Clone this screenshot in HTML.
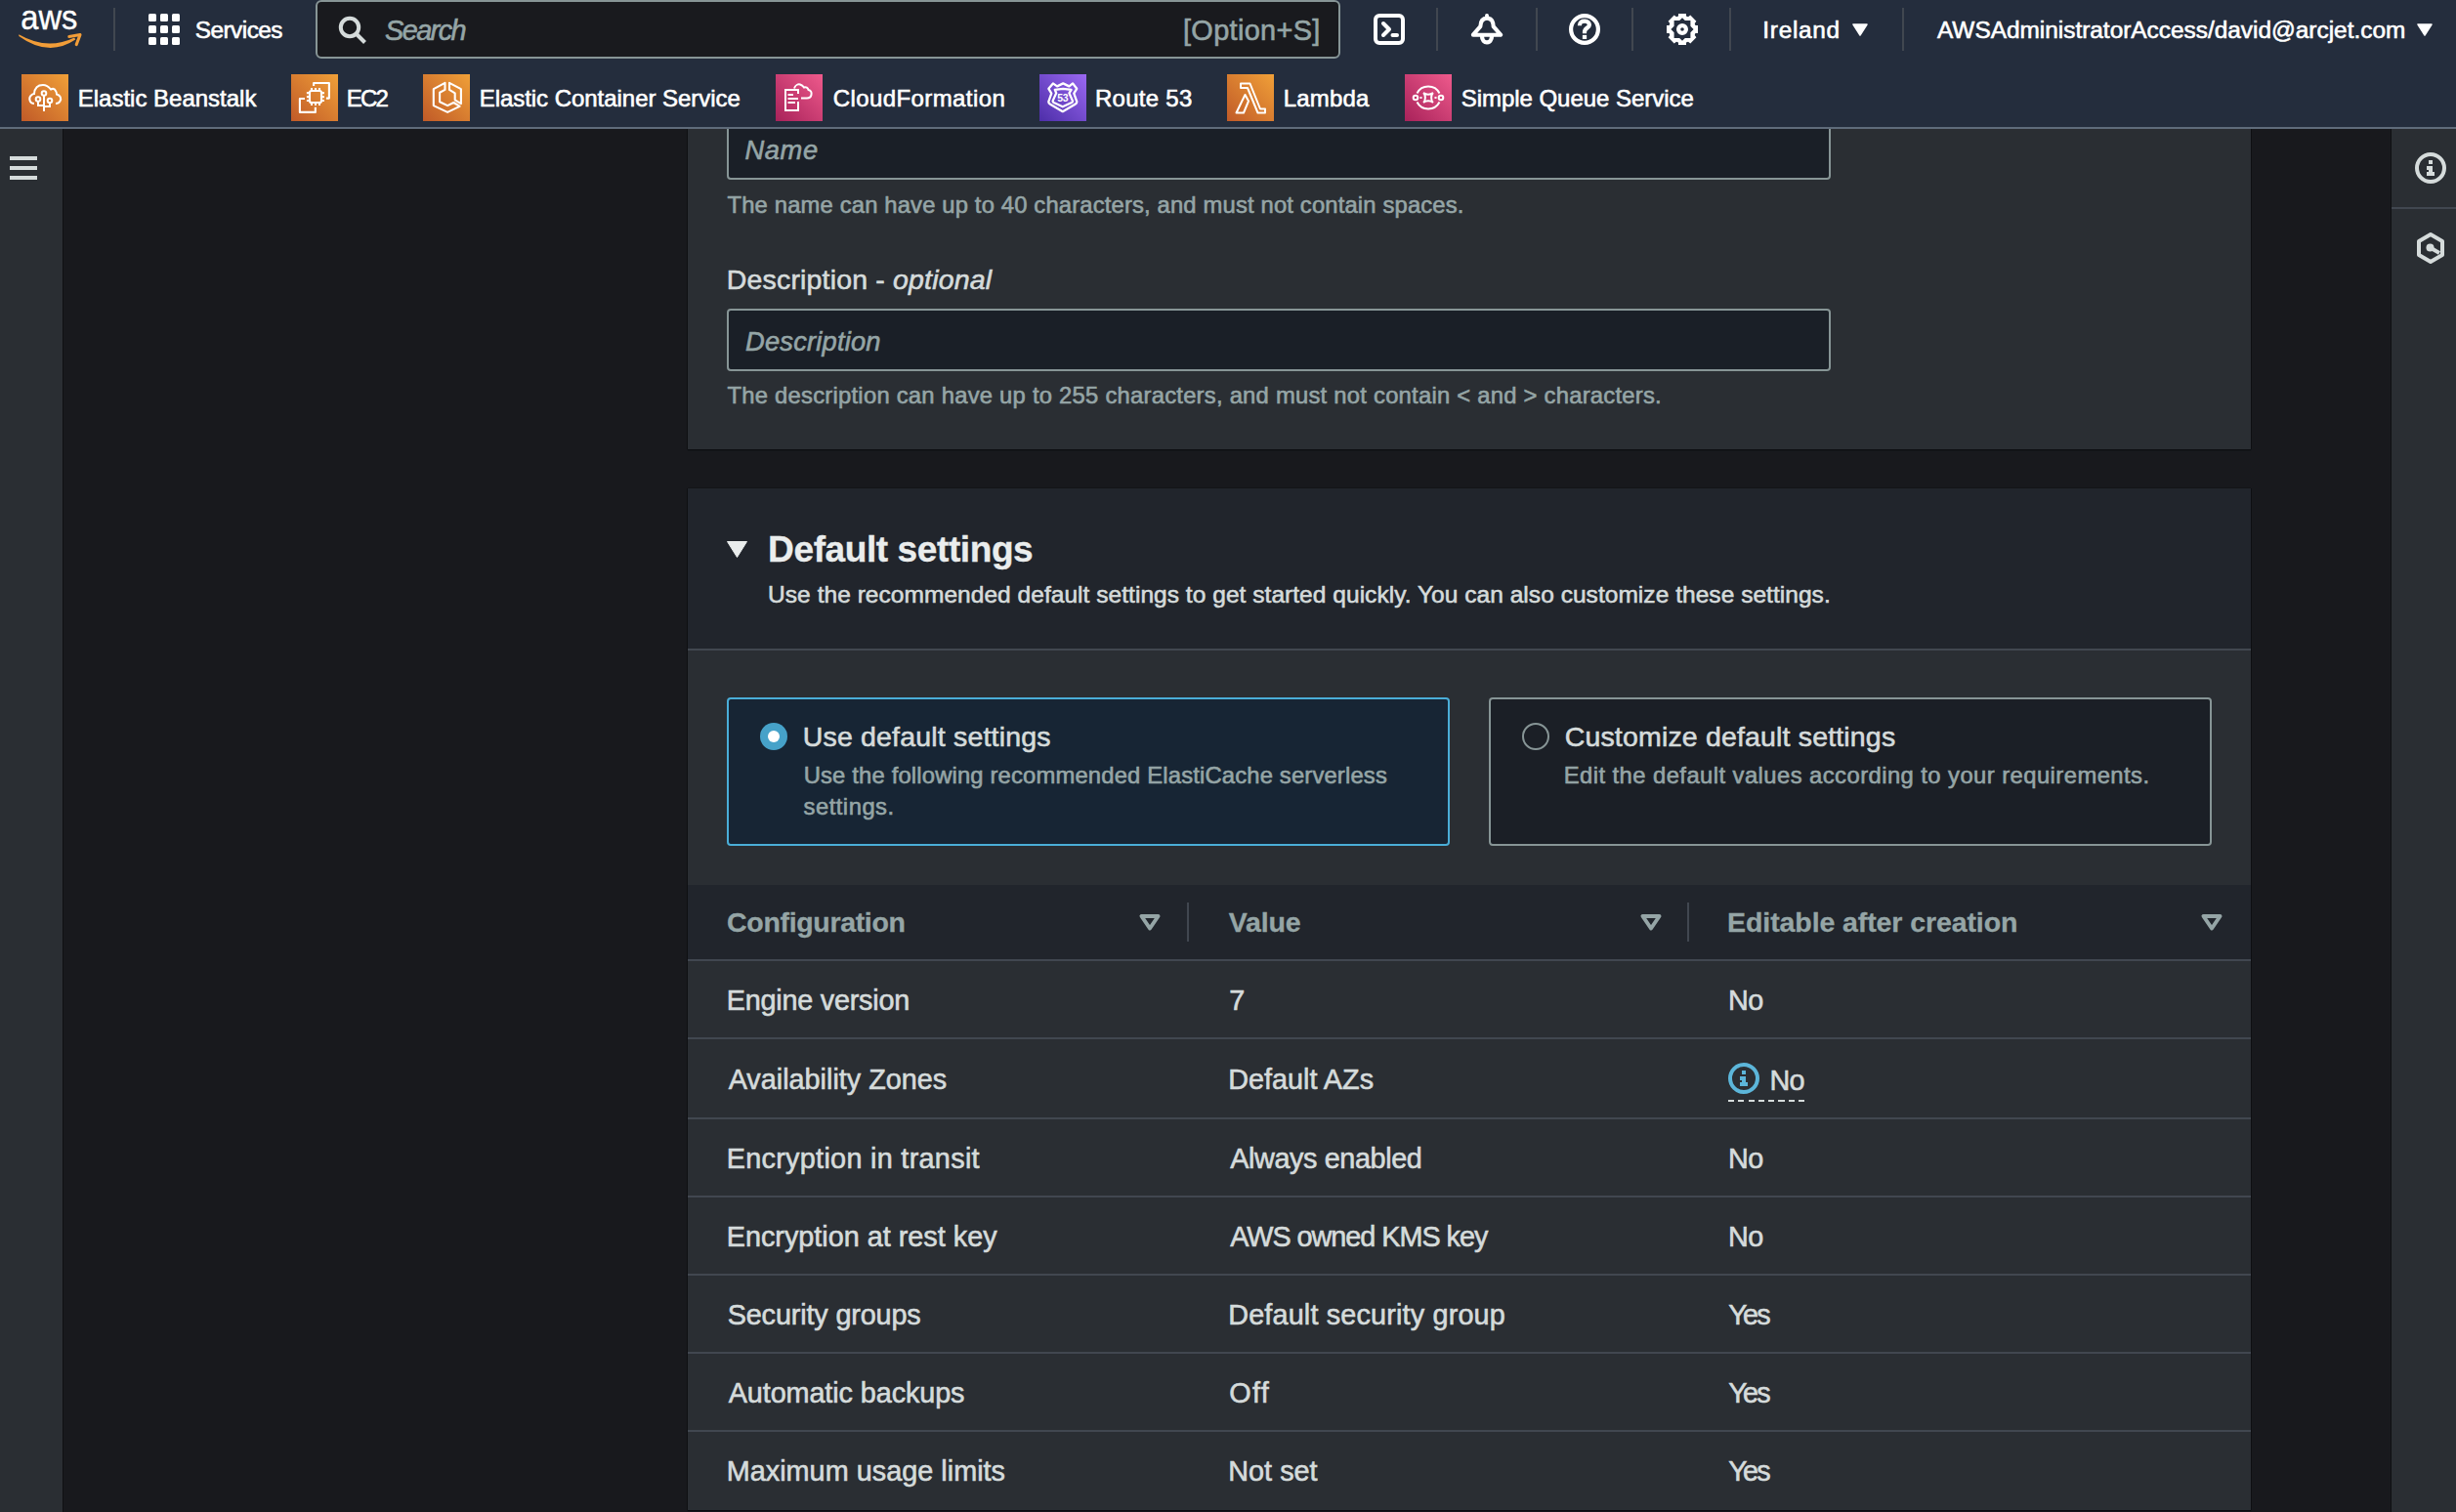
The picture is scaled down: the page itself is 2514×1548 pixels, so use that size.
<!DOCTYPE html>
<html><head><meta charset="utf-8">
<style>
html,body{margin:0;padding:0;}
body{width:2514px;height:1548px;overflow:hidden;background:#18191d;position:relative;font-family:"Liberation Sans",sans-serif;}
.t{position:absolute;white-space:nowrap;line-height:1;font-family:"Liberation Sans",sans-serif;}
.b{position:absolute;box-sizing:border-box;}
svg{position:absolute;overflow:visible;}
</style></head><body>
<!-- main layout backgrounds -->
<div class=b style="left:0;top:132px;width:64px;height:1416px;background:#2a2e33;box-shadow:1px 0 0 #0f1013;"></div>
<div class=b style="left:2448px;top:132px;width:66px;height:1416px;background:#2a2e33;box-shadow:-1px 0 0 #0f1013;"></div>
<div class=b style="left:2448px;top:212px;width:66px;height:2px;background:#414750;"></div>

<!-- panel 1 -->
<div class=b style="left:704px;top:100px;width:1600px;height:360px;background:#2a2e33;box-shadow:1px 0 0 #0e0f12,-1px 0 0 #0e0f12,0 1px 1px #0b0d10;"></div>
<div class=b style="left:744px;top:120px;width:1130px;height:64px;background:#1a1f27;border:2px solid #879596;border-radius:4px;"></div>
<div class=b style="left:744px;top:316px;width:1130px;height:64px;background:#1a1f27;border:2px solid #879596;border-radius:4px;"></div>

<!-- panel 2 -->
<div class=b style="left:704px;top:500px;width:1600px;height:1046px;background:#2a2e33;box-shadow:1px 0 0 #0e0f12,-1px 0 0 #0e0f12,0 1px 1px #0b0d10,0 -1px 0 #131417;"></div>
<div class=b style="left:704px;top:500px;width:1600px;height:164px;background:#21252c;"></div>
<div class=b style="left:704px;top:664px;width:1600px;height:2px;background:#414750;"></div>
<!-- triangle -->
<svg style="left:744px;top:554px" width="21" height="17" viewBox="0 0 21 17"><path d="M0.5 0.5 L20.5 0.5 L10.5 16.5 Z" fill="#eaeded" stroke="#eaeded" stroke-width="1" stroke-linejoin="round"/></svg>

<!-- tiles -->
<div class=b style="left:744px;top:714px;width:740px;height:152px;background:#172534;border:2px solid #4aaed8;border-radius:4px;"></div>
<div class=b style="left:1524px;top:714px;width:740px;height:152px;background:#1b1f26;border:2px solid #879596;border-radius:4px;"></div>
<svg style="left:778px;top:740px" width="28" height="28" viewBox="0 0 28 28"><circle cx="14" cy="14" r="14" fill="#46a2c9"/><circle cx="14" cy="14" r="6" fill="#ffffff"/></svg>
<svg style="left:1558px;top:740px" width="28" height="28" viewBox="0 0 28 28"><circle cx="14" cy="14" r="13" fill="#1b1f26" stroke="#879596" stroke-width="2"/></svg>

<!-- table -->
<div class=b style="left:704px;top:906px;width:1600px;height:76px;background:#21252c;"></div>
<div class=b style="left:704px;top:982px;width:1600px;height:2px;background:#414750;"></div>
<div class=b style="left:704px;top:1062px;width:1600px;height:2px;background:#414750;"></div>
<div class=b style="left:704px;top:1144px;width:1600px;height:2px;background:#414750;"></div>
<div class=b style="left:704px;top:1224px;width:1600px;height:2px;background:#414750;"></div>
<div class=b style="left:704px;top:1304px;width:1600px;height:2px;background:#414750;"></div>
<div class=b style="left:704px;top:1384px;width:1600px;height:2px;background:#414750;"></div>
<div class=b style="left:704px;top:1464px;width:1600px;height:2px;background:#414750;"></div>
<div class=b style="left:1215px;top:924px;width:2px;height:40px;background:#414750;"></div>
<div class=b style="left:1727px;top:924px;width:2px;height:40px;background:#414750;"></div>
<svg style="left:1166px;top:936px" width="22" height="17" viewBox="0 0 22 17"><path d="M2.5 2 L19.5 2 L11 14.5 Z" fill="none" stroke="#95a5a6" stroke-width="4" stroke-linejoin="round"/></svg>
<svg style="left:1679px;top:936px" width="22" height="17" viewBox="0 0 22 17"><path d="M2.5 2 L19.5 2 L11 14.5 Z" fill="none" stroke="#95a5a6" stroke-width="4" stroke-linejoin="round"/></svg>
<svg style="left:2253px;top:936px" width="22" height="17" viewBox="0 0 22 17"><path d="M2.5 2 L19.5 2 L11 14.5 Z" fill="none" stroke="#95a5a6" stroke-width="4" stroke-linejoin="round"/></svg>
<!-- AZ info icon + dashed underline -->
<svg style="left:1769px;top:1088px" width="32" height="32" viewBox="0 0 32 32"><circle cx="16" cy="16" r="14" fill="none" stroke="#5cb6da" stroke-width="4"/><rect x="14" y="8" width="4" height="4" fill="#5cb6da"/><path d="M12 14 H18 V20 H20 V24 H12 V20 H14 V18 H12 Z" fill="#5cb6da"/></svg>
<div class=b style="left:1769px;top:1126px;width:78px;height:2px;background:repeating-linear-gradient(90deg,#d5dbdb 0 6.2px,transparent 6.2px 10.3px);"></div>

<!-- right strip icons -->
<svg style="left:2472px;top:156px" width="32" height="32" viewBox="0 0 32 32"><circle cx="16" cy="16" r="14" fill="none" stroke="#d5dbdb" stroke-width="4"/><rect x="14" y="8" width="4" height="4" fill="#d5dbdb"/><path d="M12 14 H18 V20 H20 V24 H12 V20 H14 V18 H12 Z" fill="#d5dbdb"/></svg>
<svg style="left:2472px;top:238px" width="32" height="32" viewBox="0 0 32 32"><path d="M16 2 L28 9 L28 23 L16 30 L4 23 L4 9 Z" fill="none" stroke="#d5dbdb" stroke-width="4" stroke-linejoin="round"/><circle cx="15.5" cy="15.5" r="4" fill="#d5dbdb"/><path d="M15.5 15.5 L25 21" stroke="#d5dbdb" stroke-width="4"/></svg>

<!-- hamburger -->
<div class=b style="left:10px;top:160px;width:28px;height:4px;background:#d5dbdb;"></div>
<div class=b style="left:10px;top:170px;width:28px;height:4px;background:#d5dbdb;"></div>
<div class=b style="left:10px;top:180px;width:28px;height:4px;background:#d5dbdb;"></div>

<!-- NAV BAR -->
<div class=b style="left:0;top:0;width:2514px;height:130px;background:#242d3d;"></div>
<div class=b style="left:0;top:130px;width:2514px;height:2px;background:#5f6b7a;"></div>
<!-- aws logo -->
<svg style="left:0;top:0" width="100" height="60" viewBox="0 0 100 60">
 <text x="21.3" y="30.4" font-family="Liberation Sans" font-size="34.5" fill="#fff" stroke="#fff" stroke-width="0.4" textLength="58" lengthAdjust="spacingAndGlyphs">aws</text>
 <path d="M19.3 35.3 Q48.2 52 76.2 38.4 L77.2 40.6 Q50 59 19.3 36.9 Z" fill="#f29d38"/>
 <path d="M70.8 37.6 L82 35.6 L78.2 45.6" fill="none" stroke="#f29d38" stroke-width="3" stroke-linejoin="round" stroke-linecap="round"/>
</svg>
<div class=b style="left:116px;top:8px;width:2px;height:44px;background:#414750;"></div>
<!-- services grid -->
<svg style="left:152px;top:14px" width="32" height="32" viewBox="0 0 32 32" fill="#fff">
 <rect x="0" y="0" width="8" height="8" rx="1.5"/><rect x="12" y="0" width="8" height="8" rx="1.5"/><rect x="24" y="0" width="8" height="8" rx="1.5"/>
 <rect x="0" y="12" width="8" height="8" rx="1.5"/><rect x="12" y="12" width="8" height="8" rx="1.5"/><rect x="24" y="12" width="8" height="8" rx="1.5"/>
 <rect x="0" y="24" width="8" height="8" rx="1.5"/><rect x="12" y="24" width="8" height="8" rx="1.5"/><rect x="24" y="24" width="8" height="8" rx="1.5"/>
</svg>
<!-- search -->
<div class=b style="left:323px;top:0px;width:1049px;height:60px;background:#191a1e;border:2px solid #879596;border-radius:6px;"></div>
<svg style="left:342px;top:12px" width="36" height="36" viewBox="0 0 36 36"><circle cx="16" cy="16" r="9.2" fill="none" stroke="#d5dbdb" stroke-width="4"/><path d="M22.5 22.5 L31.5 31.5" stroke="#d5dbdb" stroke-width="4"/></svg>
<!-- icons -->
<svg style="left:1406px;top:14px" width="32" height="32" viewBox="0 0 32 32"><rect x="2" y="2" width="28" height="28" rx="4" fill="none" stroke="#fff" stroke-width="4"/><path d="M10 10 L16 16 L10 22" fill="none" stroke="#fff" stroke-width="4" stroke-linecap="round" stroke-linejoin="round"/><path d="M19.5 22 H24" stroke="#fff" stroke-width="4" stroke-linecap="round"/></svg>
<div class=b style="left:1470px;top:8px;width:2px;height:44px;background:#414750;"></div>
<svg style="left:1506px;top:14px" width="32" height="32" viewBox="0 0 32 32"><path d="M1.9 21.7 L9.3 13.2 C 9.5 7.5 11.8 4.6 16 4.6 C 20.2 4.6 22.5 7.5 22.7 13.2 L30.1 21.7 Z" fill="none" stroke="#fff" stroke-width="4.1" stroke-linejoin="round"/><path d="M11 23 C 11 31.5 21 31.5 21 23" fill="none" stroke="#fff" stroke-width="4.3"/><rect x="14.1" y="0" width="3.8" height="4" rx="1.6" fill="#fff"/></svg>
<div class=b style="left:1572px;top:8px;width:2px;height:44px;background:#414750;"></div>
<svg style="left:1606px;top:14px" width="32" height="32" viewBox="0 0 32 32"><circle cx="16" cy="16" r="13.9" fill="none" stroke="#fff" stroke-width="4.2"/><path d="M10.9 12.3 C 10.9 8.8 13 7.6 16.2 7.6 C 19.3 7.6 20.9 9.4 20.9 11.4 C 20.9 14.6 16 14.6 16 18.8 V20.3" fill="none" stroke="#fff" stroke-width="4.2"/><rect x="13.85" y="21.9" width="4.3" height="4.1" fill="#fff"/></svg>
<div class=b style="left:1670px;top:8px;width:2px;height:44px;background:#414750;"></div>
<svg style="left:1706px;top:14px" width="32" height="32" viewBox="0 0 32 32"><path fill="#fff" fill-rule="evenodd" d="M12 0 H20 V2.6 L22 3.3 L24.3 1.6 L30.4 7.7 L28.7 10 L29.4 12 H32 V20 H29.4 L28.7 22 L30.4 24.3 L24.3 30.4 L22 28.7 L20 29.4 V32 H12 V29.4 L10 28.7 L7.7 30.4 L1.6 24.3 L3.3 22 L2.6 20 H0 V12 H2.6 L3.3 10 L1.6 7.7 L7.7 1.6 L10 3.3 L12 2.6 Z M16 4.2 L18.85 7.1 L24.4 7.1 L24.4 12.75 L27.6 16 L24.4 19.25 L24.4 24.9 L18.85 24.9 L16 27.8 L13.15 24.9 L7.6 24.9 L7.6 19.25 L4.4 16 L7.6 12.75 L7.6 7.1 L13.15 7.1 Z"/><circle cx="16" cy="16" r="3.9" fill="none" stroke="#fff" stroke-width="4.2"/></svg>
<div class=b style="left:1770px;top:8px;width:2px;height:44px;background:#414750;"></div>
<svg style="left:1896px;top:24px" width="16" height="13" viewBox="0 0 16 13"><path d="M1 1 H15 L8 12 Z" fill="#fff" stroke="#fff" stroke-width="1.5" stroke-linejoin="round"/></svg>
<div class=b style="left:1947px;top:8px;width:2px;height:44px;background:#414750;"></div>
<svg style="left:2474px;top:24px" width="16" height="13" viewBox="0 0 16 13"><path d="M1 1 H15 L8 12 Z" fill="#fff" stroke="#fff" stroke-width="1.5" stroke-linejoin="round"/></svg>

<!-- favorites icons -->
<svg width="0" height="0" style="position:absolute"><defs>
<linearGradient id="gOr" x1="0" y1="1" x2="1" y2="0"><stop offset="0" stop-color="#c05a28"/><stop offset="1" stop-color="#f0a038"/></linearGradient>
<linearGradient id="gPk" x1="0" y1="1" x2="1" y2="0"><stop offset="0" stop-color="#a8225a"/><stop offset="1" stop-color="#ee5a8c"/></linearGradient>
<linearGradient id="gPu" x1="0" y1="1" x2="1" y2="0"><stop offset="0" stop-color="#4d2ea8"/><stop offset="1" stop-color="#9a68f2"/></linearGradient>
</defs></svg>
<!-- EB -->
<svg style="left:22px;top:76px" width="48" height="48" viewBox="0 0 48 48"><rect width="48" height="48" fill="url(#gOr)"/>
 <g fill="none" stroke="#fff" stroke-width="2">
 <path d="M13 30 C 8 30 7 24 10 21.5 C 11 20.5 12 20 13 20 C 13.5 14 17 11 22 11 C 26 11 28 13 30 15.5 C 32 14.5 34 15 35 17 C 36 18.5 36 19.5 36 20.5 C 40 21.5 41 25 39.5 27.5 C 38.5 29.5 37 30 35 30"/>
 <circle cx="23" cy="19.5" r="2.3"/><circle cx="17" cy="25.5" r="2.3"/><circle cx="29" cy="27" r="2.3"/>
 <path d="M23 22 V38 M17 28 V32 H23 M29 29.5 V33 H23"/></g></svg>
<!-- EC2 -->
<svg style="left:298px;top:76px" width="48" height="48" viewBox="0 0 48 48"><rect width="48" height="48" fill="url(#gOr)"/>
 <g fill="none" stroke="#fff" stroke-width="2.1" stroke-linejoin="round">
 <path d="M23.1 11.9 V9.05 H38.9 V24.6 H35.9"/><path d="M14 25 H8.9 V38.9 H24.85 V33.8"/>
 <rect x="19" y="17" width="12" height="12" rx="1.8"/>
 <path d="M21 14 V16.5 M25 14 V16.5 M29 14 V16.5 M21 29.5 V32 M25 29.5 V32 M29 29.5 V32 M15.9 19.1 H18.5 M15.9 23.1 H18.5 M15.9 27.05 H18.5 M31.5 19.1 H34 M31.5 23.1 H34 M31.5 27.05 H34"/></g></svg>
<!-- ECS -->
<svg style="left:433px;top:76px" width="48" height="48" viewBox="0 0 48 48"><rect width="48" height="48" fill="url(#gOr)"/>
 <g fill="none" stroke="#fff" stroke-width="2.1" stroke-linejoin="round">
 <path d="M22.5 8.8 L10.8 15.2 V32.1 L25.1 38.9 L37.6 32.9 L31.4 29 L25.1 32.1 L17.1 28.3 V18.7 L22.5 15.9 Z"/>
 <path d="M27 8.8 L38.9 15.2 V30.2 L32.7 26.3 V19.4 L27 15.9 Z"/></g></svg>
<!-- CF -->
<svg style="left:794px;top:76px" width="48" height="48" viewBox="0 0 48 48"><rect width="48" height="48" fill="url(#gPk)"/>
 <g fill="none" stroke="#fff" stroke-width="2">
 <path d="M23 20 V16 H10 V37 H23 V28"/><path d="M12.5 21 H18 M12.5 25 H23 M12.5 29 H20"/>
 <path d="M19 14.5 C 20 11 23 10 25 10.5 C 27 11 28 12 29 13.5 C 31 12.5 33 14 33.5 16 C 36 16.5 37 18.5 36.5 21 C 36 23.5 34 24.5 32 24.5 H26"/></g></svg>
<!-- R53 -->
<svg style="left:1064px;top:76px" width="48" height="48" viewBox="0 0 48 48"><rect width="48" height="48" fill="url(#gPu)"/>
 <g fill="none" stroke="#fff" stroke-width="2.3" stroke-linejoin="round">
 <path d="M13.9 9.4 L18.1 12.4 L24.2 9.4 L30.4 12.4 L34.1 9.4 L38.2 14.8 L35.3 19.7 L38.3 28.2 C 38.3 29.5 37.5 30.2 36.5 30.8 L23.8 38.2 L11.1 30.8 C 10.1 30.2 9.3 29.5 9.3 28.2 L12.3 19.7 L9.4 14.8 Z"/>
 <path d="M15.8 15.8 L24.2 14.9 L32.6 15.8 L30.4 19.3 L34 27.4 C 34 28.2 33.6 28.7 33 29 L23.8 33.3 L14.6 29 C 14 28.7 13.6 28.2 13.6 27.4 L17.2 19.3 Z"/></g>
 <text x="23.8" y="27.9" text-anchor="middle" font-family="Liberation Sans" font-size="10.5" font-weight="bold" fill="#fff" letter-spacing="-0.3">53</text></svg>
<!-- Lambda -->
<svg style="left:1256px;top:76px" width="48" height="48" viewBox="0 0 48 48"><rect width="48" height="48" fill="url(#gOr)"/>
 <g fill="none" stroke="#fff" stroke-width="2" stroke-linejoin="round">
 <path d="M14 9.5 H23.5 L34 35.5 H39 V39.5 H31.5 L21 14 H14 Z"/>
 <path d="M18.5 21 L22 27.5 L17 39.5 H9.5 Z"/></g></svg>
<!-- SQS -->
<svg style="left:1438px;top:76px" width="48" height="48" viewBox="0 0 48 48"><rect width="48" height="48" fill="url(#gPk)"/>
 <g fill="none" stroke="#fff" stroke-width="2">
 <path d="M12.5 19.5 A 13 13 0 0 1 35.5 19.5"/><path d="M12.5 28.5 A 13 13 0 0 0 35.5 28.5"/>
 <circle cx="11" cy="24" r="2.3"/><circle cx="37" cy="24" r="2.3"/>
 <path d="M19 19 C 21.5 21 21.5 27 19 29 C 22 27 26 27 29 29 C 26.5 27 26.5 21 29 19 C 26 21 22 21 19 19 Z"/></g>
 <rect x="15.5" y="23" width="2" height="2" fill="#fff"/><rect x="30.5" y="23" width="2" height="2" fill="#fff"/></svg>

<span class=t style="left:199.80px;top:19.45px;font-size:24.4px;color:#ffffff;letter-spacing:-0.543px;font-weight:normal;font-style:normal;-webkit-text-stroke:0.6px #ffffff;">Services</span>
<span class=t style="left:394.00px;top:16.74px;font-size:28.9px;color:#95a5a6;letter-spacing:-1.600px;font-weight:normal;font-style:italic;-webkit-text-stroke:0.6px #95a5a6;">Search</span>
<span class=t style="left:1211.00px;top:16.54px;font-size:28.9px;color:#95a5a6;letter-spacing:0.333px;font-weight:normal;font-style:normal;-webkit-text-stroke:0.6px #95a5a6;">[Option+S]</span>
<span class=t style="left:1804.30px;top:19.35px;font-size:24.4px;color:#ffffff;letter-spacing:0.717px;font-weight:normal;font-style:normal;-webkit-text-stroke:0.6px #ffffff;">Ireland</span>
<span class=t style="left:1983.00px;top:19.35px;font-size:24.4px;color:#ffffff;letter-spacing:0.000px;font-weight:normal;font-style:normal;-webkit-text-stroke:0.6px #ffffff;">AWSAdministratorAccess/david@arcjet.com</span>
<span class=t style="left:79.70px;top:88.88px;font-size:24.0px;color:#ffffff;letter-spacing:0.000px;font-weight:normal;font-style:normal;-webkit-text-stroke:0.6px #ffffff;">Elastic Beanstalk</span>
<span class=t style="left:354.70px;top:88.88px;font-size:24.0px;color:#ffffff;letter-spacing:-1.750px;font-weight:normal;font-style:normal;-webkit-text-stroke:0.6px #ffffff;">EC2</span>
<span class=t style="left:490.70px;top:88.88px;font-size:24.0px;color:#ffffff;letter-spacing:-0.042px;font-weight:normal;font-style:normal;-webkit-text-stroke:0.6px #ffffff;">Elastic Container Service</span>
<span class=t style="left:852.70px;top:88.88px;font-size:24.0px;color:#ffffff;letter-spacing:0.408px;font-weight:normal;font-style:normal;-webkit-text-stroke:0.6px #ffffff;">CloudFormation</span>
<span class=t style="left:1121.00px;top:88.88px;font-size:24.0px;color:#ffffff;letter-spacing:0.271px;font-weight:normal;font-style:normal;-webkit-text-stroke:0.6px #ffffff;">Route 53</span>
<span class=t style="left:1313.70px;top:88.88px;font-size:24.0px;color:#ffffff;letter-spacing:0.200px;font-weight:normal;font-style:normal;-webkit-text-stroke:0.6px #ffffff;">Lambda</span>
<span class=t style="left:1495.70px;top:88.88px;font-size:24.0px;color:#ffffff;letter-spacing:-0.037px;font-weight:normal;font-style:normal;-webkit-text-stroke:0.6px #ffffff;">Simple Queue Service</span>
<span class=t style="left:762.50px;top:140.29px;font-size:27.3px;color:#95a5a6;letter-spacing:0.600px;font-weight:normal;font-style:italic;-webkit-text-stroke:0.6px #95a5a6;">Name</span>
<span class=t style="left:744.50px;top:197.55px;font-size:23.8px;color:#95a5a6;letter-spacing:0.159px;font-weight:normal;font-style:normal;-webkit-text-stroke:0.6px #95a5a6;">The name can have up to 40 characters, and must not contain spaces.</span>
<span class=t style="left:743.80px;top:271.67px;font-size:28.5px;color:#d5dbdb;letter-spacing:0.167px;font-weight:normal;font-style:normal;-webkit-text-stroke:0.6px #d5dbdb;">Description - <i>optional</i></span>
<span class=t style="left:763.00px;top:336.29px;font-size:27.3px;color:#95a5a6;letter-spacing:0.200px;font-weight:normal;font-style:italic;-webkit-text-stroke:0.6px #95a5a6;">Description</span>
<span class=t style="left:744.50px;top:393.05px;font-size:23.8px;color:#95a5a6;letter-spacing:0.244px;font-weight:normal;font-style:normal;-webkit-text-stroke:0.6px #95a5a6;">The description can have up to 255 characters, and must not contain &lt; and &gt; characters.</span>
<span class=t style="left:786.10px;top:543.69px;font-size:37.1px;color:#eaeded;letter-spacing:-0.433px;font-weight:bold;font-style:normal;-webkit-text-stroke:0.3px #eaeded;">Default settings</span>
<span class=t style="left:786.10px;top:597.06px;font-size:24.5px;color:#d5dbdb;letter-spacing:0.041px;font-weight:normal;font-style:normal;-webkit-text-stroke:0.6px #d5dbdb;">Use the recommended default settings to get started quickly. You can also customize these settings.</span>
<span class=t style="left:821.70px;top:740.37px;font-size:28.5px;color:#d5dbdb;letter-spacing:0.184px;font-weight:normal;font-style:normal;-webkit-text-stroke:0.6px #d5dbdb;">Use default settings</span>
<span class=t style="left:822.70px;top:782.05px;font-size:23.8px;color:#95a5a6;letter-spacing:0.167px;font-weight:normal;font-style:normal;-webkit-text-stroke:0.6px #95a5a6;">Use the following recommended ElastiCache serverless</span>
<span class=t style="left:822.50px;top:813.75px;font-size:23.8px;color:#95a5a6;letter-spacing:0.500px;font-weight:normal;font-style:normal;-webkit-text-stroke:0.6px #95a5a6;">settings.</span>
<span class=t style="left:1601.70px;top:740.37px;font-size:28.5px;color:#d5dbdb;letter-spacing:0.168px;font-weight:normal;font-style:normal;-webkit-text-stroke:0.6px #d5dbdb;">Customize default settings</span>
<span class=t style="left:1600.70px;top:782.05px;font-size:23.8px;color:#95a5a6;letter-spacing:0.443px;font-weight:normal;font-style:normal;-webkit-text-stroke:0.6px #95a5a6;">Edit the default values according to your requirements.</span>
<span class=t style="left:744.10px;top:929.67px;font-size:28.5px;color:#95a5a6;letter-spacing:-0.333px;font-weight:bold;font-style:normal;-webkit-text-stroke:0.3px #95a5a6;">Configuration</span>
<span class=t style="left:1257.80px;top:929.67px;font-size:28.5px;color:#95a5a6;letter-spacing:-0.175px;font-weight:bold;font-style:normal;-webkit-text-stroke:0.3px #95a5a6;">Value</span>
<span class=t style="left:1768.10px;top:929.67px;font-size:28.5px;color:#95a5a6;letter-spacing:-0.091px;font-weight:bold;font-style:normal;-webkit-text-stroke:0.3px #95a5a6;">Editable after creation</span>
<span class=t style="left:743.70px;top:1009.52px;font-size:28.8px;color:#d5dbdb;letter-spacing:-0.231px;font-weight:normal;font-style:normal;-webkit-text-stroke:0.6px #d5dbdb;">Engine version</span>
<span class=t style="left:1258.20px;top:1009.52px;font-size:28.8px;color:#d5dbdb;letter-spacing:-0.600px;font-weight:normal;font-style:normal;-webkit-text-stroke:0.6px #d5dbdb;">7</span>
<span class=t style="left:1769.10px;top:1009.52px;font-size:28.8px;color:#d5dbdb;letter-spacing:-0.600px;font-weight:normal;font-style:normal;-webkit-text-stroke:0.6px #d5dbdb;">No</span>
<span class=t style="left:745.70px;top:1090.52px;font-size:28.8px;color:#d5dbdb;letter-spacing:0.000px;font-weight:normal;font-style:normal;-webkit-text-stroke:0.6px #d5dbdb;">Availability Zones</span>
<span class=t style="left:1257.20px;top:1090.52px;font-size:28.8px;color:#d5dbdb;letter-spacing:0.000px;font-weight:normal;font-style:normal;-webkit-text-stroke:0.6px #d5dbdb;">Default AZs</span>
<span class=t style="left:1811.40px;top:1092.02px;font-size:28.8px;color:#d5dbdb;letter-spacing:-0.700px;font-weight:normal;font-style:normal;-webkit-text-stroke:0.6px #d5dbdb;">No</span>
<span class=t style="left:743.70px;top:1171.52px;font-size:28.8px;color:#d5dbdb;letter-spacing:0.300px;font-weight:normal;font-style:normal;-webkit-text-stroke:0.6px #d5dbdb;">Encryption in transit</span>
<span class=t style="left:1259.20px;top:1171.52px;font-size:28.8px;color:#d5dbdb;letter-spacing:-0.385px;font-weight:normal;font-style:normal;-webkit-text-stroke:0.6px #d5dbdb;">Always enabled</span>
<span class=t style="left:1769.10px;top:1171.52px;font-size:28.8px;color:#d5dbdb;letter-spacing:-0.600px;font-weight:normal;font-style:normal;-webkit-text-stroke:0.6px #d5dbdb;">No</span>
<span class=t style="left:743.70px;top:1251.52px;font-size:28.8px;color:#d5dbdb;letter-spacing:0.000px;font-weight:normal;font-style:normal;-webkit-text-stroke:0.6px #d5dbdb;">Encryption at rest key</span>
<span class=t style="left:1259.20px;top:1251.52px;font-size:28.8px;color:#d5dbdb;letter-spacing:-1.031px;font-weight:normal;font-style:normal;-webkit-text-stroke:0.6px #d5dbdb;">AWS owned KMS key</span>
<span class=t style="left:1769.10px;top:1251.52px;font-size:28.8px;color:#d5dbdb;letter-spacing:-0.600px;font-weight:normal;font-style:normal;-webkit-text-stroke:0.6px #d5dbdb;">No</span>
<span class=t style="left:744.70px;top:1331.52px;font-size:28.8px;color:#d5dbdb;letter-spacing:-0.143px;font-weight:normal;font-style:normal;-webkit-text-stroke:0.6px #d5dbdb;">Security groups</span>
<span class=t style="left:1257.20px;top:1331.52px;font-size:28.8px;color:#d5dbdb;letter-spacing:0.167px;font-weight:normal;font-style:normal;-webkit-text-stroke:0.6px #d5dbdb;">Default security group</span>
<span class=t style="left:1769.30px;top:1331.52px;font-size:28.8px;color:#d5dbdb;letter-spacing:-1.850px;font-weight:normal;font-style:normal;-webkit-text-stroke:0.6px #d5dbdb;">Yes</span>
<span class=t style="left:745.70px;top:1411.52px;font-size:28.8px;color:#d5dbdb;letter-spacing:-0.094px;font-weight:normal;font-style:normal;-webkit-text-stroke:0.6px #d5dbdb;">Automatic backups</span>
<span class=t style="left:1258.20px;top:1411.52px;font-size:28.8px;color:#d5dbdb;letter-spacing:1.350px;font-weight:normal;font-style:normal;-webkit-text-stroke:0.6px #d5dbdb;">Off</span>
<span class=t style="left:1769.30px;top:1411.52px;font-size:28.8px;color:#d5dbdb;letter-spacing:-1.850px;font-weight:normal;font-style:normal;-webkit-text-stroke:0.6px #d5dbdb;">Yes</span>
<span class=t style="left:743.70px;top:1491.52px;font-size:28.8px;color:#d5dbdb;letter-spacing:0.026px;font-weight:normal;font-style:normal;-webkit-text-stroke:0.6px #d5dbdb;">Maximum usage limits</span>
<span class=t style="left:1257.20px;top:1491.52px;font-size:28.8px;color:#d5dbdb;letter-spacing:0.033px;font-weight:normal;font-style:normal;-webkit-text-stroke:0.6px #d5dbdb;">Not set</span>
<span class=t style="left:1769.30px;top:1491.52px;font-size:28.8px;color:#d5dbdb;letter-spacing:-1.850px;font-weight:normal;font-style:normal;-webkit-text-stroke:0.6px #d5dbdb;">Yes</span>
</body></html>
